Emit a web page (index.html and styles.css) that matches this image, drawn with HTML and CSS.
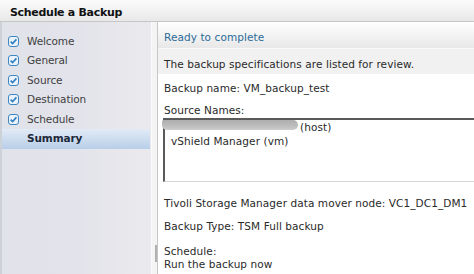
FILE: index.html
```html
<!DOCTYPE html>
<html>
<head>
<meta charset="utf-8">
<link rel="stylesheet" href="styles.css">
</head>
<body>
<div class="window">
  <div class="titlebar">Schedule a Backup</div>
  <div class="main">
    <nav class="sidebar">
      <div class="step"><span class="check"><svg viewBox="0 0 11 11" width="11" height="11"><rect x="0.5" y="0.5" width="10" height="10" rx="2.5" fill="#eaf3fb" stroke="#3c86c4"/><path d="M2.6 5.6 L4.6 7.6 L8.4 3.4" fill="none" stroke="#2f7fc0" stroke-width="1.6"/></svg></span>Welcome</div>
      <div class="step"><span class="check"><svg viewBox="0 0 11 11" width="11" height="11"><rect x="0.5" y="0.5" width="10" height="10" rx="2.5" fill="#eaf3fb" stroke="#3c86c4"/><path d="M2.6 5.6 L4.6 7.6 L8.4 3.4" fill="none" stroke="#2f7fc0" stroke-width="1.6"/></svg></span>General</div>
      <div class="step"><span class="check"><svg viewBox="0 0 11 11" width="11" height="11"><rect x="0.5" y="0.5" width="10" height="10" rx="2.5" fill="#eaf3fb" stroke="#3c86c4"/><path d="M2.6 5.6 L4.6 7.6 L8.4 3.4" fill="none" stroke="#2f7fc0" stroke-width="1.6"/></svg></span>Source</div>
      <div class="step"><span class="check"><svg viewBox="0 0 11 11" width="11" height="11"><rect x="0.5" y="0.5" width="10" height="10" rx="2.5" fill="#eaf3fb" stroke="#3c86c4"/><path d="M2.6 5.6 L4.6 7.6 L8.4 3.4" fill="none" stroke="#2f7fc0" stroke-width="1.6"/></svg></span>Destination</div>
      <div class="step"><span class="check"><svg viewBox="0 0 11 11" width="11" height="11"><rect x="0.5" y="0.5" width="10" height="10" rx="2.5" fill="#eaf3fb" stroke="#3c86c4"/><path d="M2.6 5.6 L4.6 7.6 L8.4 3.4" fill="none" stroke="#2f7fc0" stroke-width="1.6"/></svg></span>Schedule</div>
      <div class="step current"><span class="check"></span>Summary</div>
    </nav>
    <div class="splitter"><div class="thumb"></div></div>
    <section class="content">
      <div class="pagehead">Ready to complete</div>
      <div class="intro">The backup specifications are listed for review.</div>
      <div class="body">
        <p class="line first">Backup name: VM_backup_test</p>
        <p class="label">Source Names:</p>
        <div class="listbox">
          <div class="item host"><span class="blur"></span>(host)</div>
          <div class="item">vShield Manager (vm)</div>
        </div>
        <p class="line tivoli">Tivoli Storage Manager data mover node: VC1_DC1_DM1</p>
        <p class="line">Backup Type: TSM Full backup</p>
        <p class="line sched">Schedule:<br>Run the backup now</p>
      </div>
    </section>
  </div>
</div>
</body>
</html>
```
FILE: styles.css
```css
html, body {
  margin: 0;
  padding: 0;
  background: #ffffff;
}
body {
  font-family: "DejaVu Sans", Verdana, sans-serif;
  font-size: 10.5px;
  line-height: 13px;
  color: #2a2a2a;
  width: 474px;
  height: 274px;
  overflow: hidden;
}
.window {
  display: flex;
  flex-direction: column;
  height: 274px;
}
.titlebar {
  height: 22px;
  flex: none;
  box-sizing: border-box;
  padding: 6px 0 0 10px;
  font-weight: bold;
  font-size: 11px;
  letter-spacing: -0.3px;
  color: #111111;
  background: linear-gradient(#fbfbfb, #e8e8e8);
  border-bottom: 1px solid #c6c6c6;
}
.main {
  flex: 1;
  display: flex;
  min-height: 0;
}
.sidebar {
  width: 151px;
  flex: none;
  box-sizing: border-box;
  border-left: 2px solid #cdd1d8;
  padding-top: 9.5px;
  background: linear-gradient(90deg, #e0e3e9, #e3e3eb 50%, #eaeaee);
}
.step {
  height: 19.5px;
  display: flex;
  align-items: center;
  padding-left: 6px;
  letter-spacing: -0.1px;
  color: #404040;
}
.check {
  width: 11px;
  height: 11px;
  margin-right: 8px;
  display: flex;
}
.step.current {
  height: 19.5px;
  margin-right: 1px;
  font-weight: bold;
  color: #1c2838;
  background: linear-gradient(#e2ebf6, #b8cee8);
}
.splitter {
  width: 7px;
  flex: none;
  box-sizing: border-box;
  background: #f4f4f4;
  border-left: 1px solid #fbfbfb;
  border-right: 1px solid #c6c6c6;
  position: relative;
}
.thumb {
  position: absolute;
  right: 0;
  top: 223px;
  width: 2px;
  height: 17px;
  background: #b0b0b0;
}
.content {
  flex: 1;
  min-width: 0;
  display: flex;
  flex-direction: column;
  letter-spacing: 0.08px;
}
.pagehead {
  height: 27px;
  flex: none;
  box-sizing: border-box;
  padding: 8.5px 0 0 6px;
  color: #2b6c99;
  background: linear-gradient(#ffffff, #e8e8e8);
  border-bottom: 1px solid #f8f8f8;
}
.intro {
  height: 25px;
  flex: none;
  box-sizing: border-box;
  padding: 8.5px 0 0 6px;
  background: #f1f1f1;
}
.body {
  padding-left: 6px;
}
.line, .label {
  margin: 0;
  white-space: nowrap;
}
.line {
  margin-top: 10px;
}
.line.first {
  margin-top: 7.5px;
}
.label {
  margin-top: 9px;
}
.listbox {
  position: relative;
  margin: 1.5px 0 0 -1px;
  height: 64px;
  box-sizing: border-box;
  border-top: 2px solid #5a5a5a;
  border-left: 2px solid #5a5a5a;
  border-bottom: 1px solid #d8d8d8;
  padding: 0 0 0 6px;
}
.item {
  line-height: 14px;
  white-space: nowrap;
}
.item.host {
  padding-left: 129px;
}
.blur {
  position: absolute;
  left: -3px;
  top: 0;
  width: 136px;
  height: 10px;
  border-radius: 2px 6px 6px 6px;
  background: linear-gradient(#aeaeae, #bdbdbd 60%, #cdcdcd);
}
.line.tivoli {
  margin-top: 14.5px;
}
.line.sched {
  margin-top: 12px;
}
```
